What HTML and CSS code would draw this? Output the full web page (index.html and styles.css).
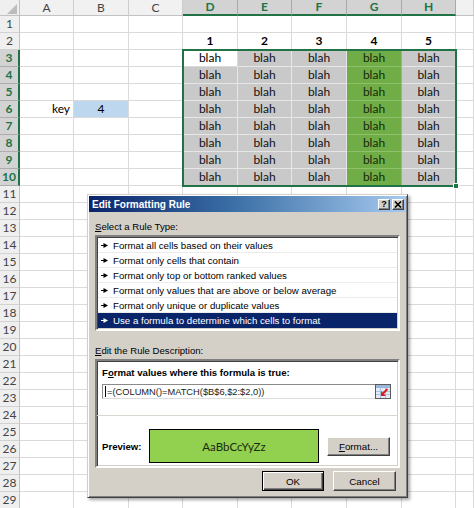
FILE: index.html
```html
<!DOCTYPE html>
<html>
<head>
<meta charset="utf-8">
<link rel="stylesheet" href="styles.css">
</head>
<body>
<div class="sheet">
  <div class="row head">
    <span class="corner"><svg width="20" height="16" viewBox="0 0 20 16"><polygon points="17,4 17,14 7,14" fill="#bcbcbc"/></svg></span>
    <span class="ch">A</span><span class="ch">B</span><span class="ch">C</span>
    <span class="ch sel">D</span><span class="ch sel">E</span><span class="ch sel">F</span><span class="ch sel">G</span><span class="ch sel">H</span>
    <span class="ch"></span>
  </div>
  <div class="row"><span class="rh">1</span><span></span><span></span><span></span><span></span><span></span><span></span><span></span><span></span><span></span></div>
  <div class="row"><span class="rh">2</span><span></span><span></span><span></span><span class="b">1</span><span class="b">2</span><span class="b">3</span><span class="b">4</span><span class="b">5</span><span></span></div>
  <div class="row"><span class="rh sel">3</span><span></span><span></span><span class="pre"></span><span class="w">blah</span><span class="g">blah</span><span class="g">blah</span><span class="gr">blah</span><span class="g">blah</span><span></span></div>
  <div class="row"><span class="rh sel">4</span><span></span><span></span><span class="pre"></span><span class="g">blah</span><span class="g">blah</span><span class="g">blah</span><span class="gr">blah</span><span class="g">blah</span><span></span></div>
  <div class="row"><span class="rh sel">5</span><span></span><span></span><span class="pre"></span><span class="g">blah</span><span class="g">blah</span><span class="g">blah</span><span class="gr">blah</span><span class="g">blah</span><span></span></div>
  <div class="row"><span class="rh sel">6</span><span class="r">key</span><span class="blue">4</span><span class="pre"></span><span class="g">blah</span><span class="g">blah</span><span class="g">blah</span><span class="gr">blah</span><span class="g">blah</span><span></span></div>
  <div class="row"><span class="rh sel">7</span><span></span><span></span><span class="pre"></span><span class="g">blah</span><span class="g">blah</span><span class="g">blah</span><span class="gr">blah</span><span class="g">blah</span><span></span></div>
  <div class="row"><span class="rh sel">8</span><span></span><span></span><span class="pre"></span><span class="g">blah</span><span class="g">blah</span><span class="g">blah</span><span class="gr">blah</span><span class="g">blah</span><span></span></div>
  <div class="row"><span class="rh sel">9</span><span></span><span></span><span class="pre"></span><span class="g">blah</span><span class="g">blah</span><span class="g">blah</span><span class="gr">blah</span><span class="g">blah</span><span></span></div>
  <div class="row"><span class="rh sel">10</span><span></span><span></span><span class="pre"></span><span class="g">blah</span><span class="g">blah</span><span class="g">blah</span><span class="gr">blah</span><span class="g">blah</span><span></span></div>
  <div class="row"><span class="rh">11</span><span></span><span></span><span></span><span></span><span></span><span></span><span></span><span></span><span></span></div>
  <div class="row"><span class="rh">12</span><span></span><span></span><span></span><span></span><span></span><span></span><span></span><span></span><span></span></div>
  <div class="row"><span class="rh">13</span><span></span><span></span><span></span><span></span><span></span><span></span><span></span><span></span><span></span></div>
  <div class="row"><span class="rh">14</span><span></span><span></span><span></span><span></span><span></span><span></span><span></span><span></span><span></span></div>
  <div class="row"><span class="rh">15</span><span></span><span></span><span></span><span></span><span></span><span></span><span></span><span></span><span></span></div>
  <div class="row"><span class="rh">16</span><span></span><span></span><span></span><span></span><span></span><span></span><span></span><span></span><span></span></div>
  <div class="row"><span class="rh">17</span><span></span><span></span><span></span><span></span><span></span><span></span><span></span><span></span><span></span></div>
  <div class="row"><span class="rh">18</span><span></span><span></span><span></span><span></span><span></span><span></span><span></span><span></span><span></span></div>
  <div class="row"><span class="rh">19</span><span></span><span></span><span></span><span></span><span></span><span></span><span></span><span></span><span></span></div>
  <div class="row"><span class="rh">20</span><span></span><span></span><span></span><span></span><span></span><span></span><span></span><span></span><span></span></div>
  <div class="row"><span class="rh">21</span><span></span><span></span><span></span><span></span><span></span><span></span><span></span><span></span><span></span></div>
  <div class="row"><span class="rh">22</span><span></span><span></span><span></span><span></span><span></span><span></span><span></span><span></span><span></span></div>
  <div class="row"><span class="rh">23</span><span></span><span></span><span></span><span></span><span></span><span></span><span></span><span></span><span></span></div>
  <div class="row"><span class="rh">24</span><span></span><span></span><span></span><span></span><span></span><span></span><span></span><span></span><span></span></div>
  <div class="row"><span class="rh">25</span><span></span><span></span><span></span><span></span><span></span><span></span><span></span><span></span><span></span></div>
  <div class="row"><span class="rh">26</span><span></span><span></span><span></span><span></span><span></span><span></span><span></span><span></span><span></span></div>
  <div class="row"><span class="rh">27</span><span></span><span></span><span></span><span></span><span></span><span></span><span></span><span></span><span></span></div>
  <div class="row"><span class="rh">28</span><span></span><span></span><span></span><span></span><span></span><span></span><span></span><span></span><span></span></div>
  <div class="row"><span class="rh">29</span><span></span><span></span><span></span><span></span><span></span><span></span><span></span><span></span><span></span></div>

  <div class="range"><div class="handle"></div></div>

  <div class="dlg">
    <div class="titlebar">
      <span class="ttl">Edit Formatting Rule</span>
      <span class="tbtns">
        <span class="tb">?</span>
        <span class="tb"><svg width="8" height="7" viewBox="0 0 8 7"><path d="M1 0.5L7 6.5M7 0.5L1 6.5" stroke="#000" stroke-width="1.6"/></svg></span>
      </span>
    </div>
    <div class="body">
      <div class="lbl"><u>S</u>elect a Rule Type:</div>
      <div class="list">
        <div class="item"><svg class="arr" width="7" height="5" viewBox="0 0 7 5"><path d="M0 2.5H3" stroke="currentColor" stroke-width="1"/><path d="M2.5 0L7 2.5L2.5 5Z" fill="currentColor"/></svg>Format all cells based on their values</div>
        <div class="item"><svg class="arr" width="7" height="5" viewBox="0 0 7 5"><path d="M0 2.5H3" stroke="currentColor" stroke-width="1"/><path d="M2.5 0L7 2.5L2.5 5Z" fill="currentColor"/></svg>Format only cells that contain</div>
        <div class="item"><svg class="arr" width="7" height="5" viewBox="0 0 7 5"><path d="M0 2.5H3" stroke="currentColor" stroke-width="1"/><path d="M2.5 0L7 2.5L2.5 5Z" fill="currentColor"/></svg>Format only top or bottom ranked values</div>
        <div class="item"><svg class="arr" width="7" height="5" viewBox="0 0 7 5"><path d="M0 2.5H3" stroke="currentColor" stroke-width="1"/><path d="M2.5 0L7 2.5L2.5 5Z" fill="currentColor"/></svg>Format only values that are above or below average</div>
        <div class="item"><svg class="arr" width="7" height="5" viewBox="0 0 7 5"><path d="M0 2.5H3" stroke="currentColor" stroke-width="1"/><path d="M2.5 0L7 2.5L2.5 5Z" fill="currentColor"/></svg>Format only unique or duplicate values</div>
        <div class="item on"><svg class="arr" width="7" height="5" viewBox="0 0 7 5"><path d="M0 2.5H3" stroke="currentColor" stroke-width="1"/><path d="M2.5 0L7 2.5L2.5 5Z" fill="currentColor"/></svg>Use a formula to determine which cells to format</div>
      </div>
      <div class="lbl2"><u>E</u>dit the Rule Description:</div>
      <div class="desc">
        <div class="fl">F<u>o</u>rmat values where this formula is true:</div>
        <div class="input">
          <span class="caret"></span><span class="ftxt">=(COLUMN()=MATCH($B$6,$2:$2,0))</span>
          <svg class="rsel" width="16" height="15" viewBox="0 0 16 15">
            <rect x="0.5" y="0.5" width="15" height="14" fill="#e4ebf4" stroke="#5a5a5a"/>
            <rect x="1" y="1" width="14" height="3" fill="#9bb7dc"/>
            <path d="M1 7.5H15M1 10.5H15M5.5 4V14M10.5 4V14" stroke="#a9c2e2" stroke-width="1"/>
            <path d="M12.5 5L8 9.5" stroke="#d61f1f" stroke-width="2"/>
            <path d="M6 7L6 12L11 12Z" fill="#d61f1f"/>
          </svg>
        </div>
        <div class="sep"></div>
        <div class="prow">
          <span class="plbl">Preview:</span>
          <span class="pbox">AaBbCcYyZz</span>
          <span class="btn fmt"><u>F</u>ormat...</span>
        </div>
      </div>
      <div class="btns">
        <span class="btn def">OK</span>
        <span class="btn">Cancel</span>
      </div>
    </div>
  </div>
</div>
</body>
</html>
```
FILE: styles.css
```css
* { box-sizing: border-box; margin: 0; padding: 0; }
html, body { width: 474px; height: 508px; overflow: hidden; background: #fff; }
body { font-family: Lato, "Liberation Sans", sans-serif; color: #000; }

.sheet { position: relative; width: 474px; height: 508px; overflow: hidden; }

.row {
  display: grid;
  grid-template-columns: 20px 54px 55px 54px 55px 54px 55px 55px 54px 18px;
  height: 17px;
}
.row.head { height: 16px; }

.row > span {
  display: block;
  border-right: 1px solid #dadada;
  border-bottom: 1px solid #dadada;
  font-size: 12px;
  line-height: 16px;
  text-align: center;
  white-space: nowrap;
  overflow: hidden;
}

.corner { background: #efefef; border-right: 1px solid #c2c2c2 !important; border-bottom: 1px solid #c2c2c2 !important; }
.corner svg { display: block; }

.row > .ch {
  background: #f1f1f1;
  color: #444;
  border-right: 1px solid #cdcdcd;
  border-bottom: 1px solid #c2c2c2;
  line-height: 15px;
}
.row > .ch.sel {
  background: #d3d3d3;
  color: #217346;
  font-weight: bold;
  border-right-color: #a9a9a9;
  border-bottom: 2px solid #217346;
  line-height: 14px;
}

.row > .rh {
  background: #efefef;
  color: #444;
  border-right: 1px solid #c2c2c2;
  border-bottom: 1px solid #d2d2d2;
}
.row > .rh.sel {
  background: #d3d3d3;
  color: #217346;
  font-weight: bold;
  border-right: 2px solid #217346;
  border-bottom-color: #adadad;
}

.row > .b { font-weight: bold; }
.row > .r { text-align: right; padding-right: 3px; }
.row > .blue { background: #bdd7ee; }
.row > .g { background: #c9c9c9; border-color: #e6e6e6; color: #111; }
.row > .gr { background: #70ad47; border-color: #8fc06c; color: #15290a; }
.row > .w { background: #fff; }

.range {
  position: absolute;
  left: 182px;
  top: 49px;
  width: 275px;
  height: 138px;
  border: 2px solid #217346;
}
.handle {
  position: absolute;
  right: -4px;
  bottom: -4px;
  width: 6px;
  height: 6px;
  background: #217346;
  border: 1px solid #fff;
}

/* dialog */
.dlg {
  position: absolute;
  left: 87px;
  top: 194px;
  width: 321px;
  height: 304px;
  background: #d4d0c8;
  border: 1px solid;
  border-color: #d4d0c8 #404040 #404040 #d4d0c8;
  box-shadow: inset 1px 1px #fff, inset -1px -1px #808080, 2px 2px 3px rgba(0, 0, 0, 0.35);
  padding: 1px;
  font-family: "Liberation Sans", Arial, sans-serif;
  font-size: 9.6px;
  color: #000;
  display: flex;
  flex-direction: column;
}
.titlebar {
  height: 16px;
  background: linear-gradient(90deg, #0a246a 0%, #3a6ea5 45%, #a6caf0 100%);
  display: flex;
  align-items: center;
  padding: 0 2px 0 3px;
}
.ttl { color: #fff; font-weight: bold; font-size: 10px; }
.tbtns { margin-left: auto; display: flex; gap: 2px; }
.tb {
  width: 12px;
  height: 11px;
  background: #d4d0c8;
  border: 1px solid;
  border-color: #fff #404040 #404040 #fff;
  box-shadow: inset -1px -1px #808080;
  display: flex;
  align-items: center;
  justify-content: center;
  font-weight: bold;
  font-size: 9px;
  line-height: 9px;
}
.tb svg { display: block; }

.body { padding: 0 6px; display: flex; flex-direction: column; }
.lbl { margin-top: 9px; line-height: 12px; }
.list {
  margin-top: 2px;
  height: 96px;
  background: #fff;
  border: 2px solid;
  border-color: #808080 #fff #fff #808080;
  box-shadow: inset 1px 1px #404040, inset -1px -1px #d4d0c8;
  padding: 1px;
}
.item {
  height: 15px;
  line-height: 15px;
  display: flex;
  align-items: center;
  padding-left: 3px;
  border-bottom: 1px solid #ececec;
  white-space: nowrap;
  font-size: 9.7px;
}
.item .arr { margin-right: 5px; flex: none; }
.item.on { background: #0a246a; color: #fff; border-bottom-color: #0a246a; }

.lbl2 { margin-top: 14px; line-height: 12px; }
.desc {
  margin-top: 2px;
  height: 109px;
  background: #fff;
  border: 2px solid;
  border-color: #808080 #fff #fff #808080;
  box-shadow: inset 1px 1px #404040, inset -1px -1px #d4d0c8;
  padding: 0 7px 0 5px;
  display: flex;
  flex-direction: column;
}
.fl { margin-top: 6px; line-height: 12px; font-weight: bold; }
.input {
  margin-top: 5px;
  height: 15px;
  border: 1px solid;
  border-color: #8a8a8a #dcdcdc #dcdcdc #8a8a8a;
  display: flex;
  align-items: center;
  position: relative;
}
.caret { width: 1px; height: 11px; background: #000; margin-left: 2px; margin-right: 1px; }
.ftxt { font-size: 9.3px; color: #222; }
.rsel { position: absolute; right: -1px; top: -1px; }
.sep { margin: 16px -7px 0 -5px; height: 1px; background: #dad7d0; }
.prow { margin-top: 13px; height: 34px; display: flex; align-items: center; }
.plbl { width: 47px; font-weight: bold; }
.pbox {
  width: 170px;
  height: 34px;
  background: #92d050;
  border: 1px solid #000;
  display: flex;
  align-items: center;
  justify-content: center;
  font-family: Lato, "Liberation Sans", sans-serif;
  font-size: 11.5px;
  color: #1c2a10;
}
.btn {
  width: 63px;
  height: 20px;
  background: #d4d0c8;
  border: 1px solid;
  border-color: #fff #404040 #404040 #fff;
  box-shadow: inset -1px -1px #808080;
  display: flex;
  align-items: center;
  justify-content: center;
  font-size: 9.8px;
}
.btn.fmt { margin-left: 8px; height: 19px; }
.btn.def {
  width: 62px;
  border: 1px solid #000;
  box-shadow: inset 1px 1px #fff, inset -1px -1px #404040, inset -2px -2px #808080;
}
.btns { margin-top: 3px; display: flex; justify-content: flex-end; gap: 9px; padding-right: 4px; }
```
